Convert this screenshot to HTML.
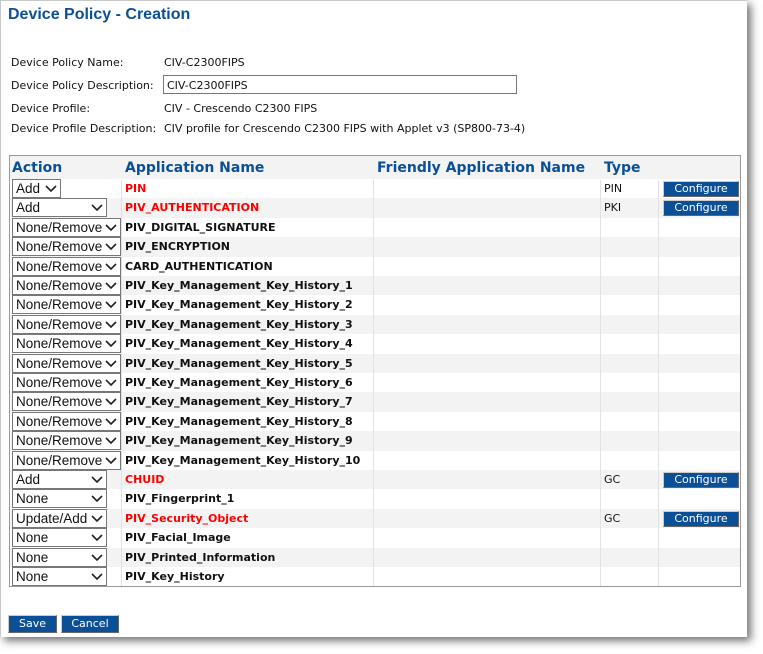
<!DOCTYPE html>
<html><head><style>
body{margin:0;width:763px;height:654px;background:#fff;position:relative;overflow:hidden;font-family:"DejaVu Sans",Verdana,sans-serif;}
#page{position:absolute;left:0;top:0;width:746px;height:636px;background:#fff;border-left:1px solid #c8c8c8;border-top:1px solid #c8c8c8;box-shadow:4px 4px 8px rgba(0,0,0,.55);}
.t{position:absolute;white-space:nowrap;}
h1{position:absolute;left:7px;top:5px;margin:0;font:bold 16px "Liberation Sans",Arial,sans-serif;color:#0b4f96;}
.lbl{font-size:11px;color:#111;}
#tbl{position:absolute;left:8px;top:154px;width:730px;height:430px;border:1px solid #999;background:#f3f3f3;}
.hd{position:absolute;top:4px;font-weight:bold;font-size:14px;color:#0b4f96;white-space:nowrap;}
.row{position:absolute;left:0;width:730px;height:19.4px;}
.row.g{background:#f3f3f3}.row.w{background:#fff}
.vl{position:absolute;top:24px;bottom:0;width:1px;background:#e2e2e2;}
.sel{position:absolute;left:2px;top:0;height:19px;border:1px solid #777;background:#fff;font:13.5px "Liberation Sans",Arial,sans-serif;color:#111;line-height:17px;padding-left:3px;box-sizing:border-box;white-space:nowrap;overflow:hidden;}
.sel svg{position:absolute;right:3px;top:5px;background:#fff;}
.nm{position:absolute;left:115px;top:3px;font-weight:bold;font-size:11px;color:#111;white-space:nowrap;}
.nm.r{color:#f00}
.ty{position:absolute;left:594px;top:3px;font-size:11px;color:#111;}
.btn{position:absolute;background:#0b4f96;color:#fff;font-size:11px;text-align:center;border:1px solid #ccc;border-right-color:#666;border-bottom-color:#666;box-sizing:border-box;}
</style></head><body>
<div id="page">
<h1>Device Policy - Creation</h1>
<div class="t lbl" style="left:10px;top:55px">Device Policy Name:</div>
<div class="t lbl" style="left:163px;top:55px">CIV-C2300FIPS</div>
<div class="t lbl" style="left:10px;top:78px">Device Policy Description:</div>
<div class="t" style="left:162px;top:74px;width:354px;height:19px;border:1px solid #777;box-sizing:border-box;"></div>
<div class="t lbl" style="left:166px;top:78px">CIV-C2300FIPS</div>
<div class="t lbl" style="left:10px;top:101px">Device Profile:</div>
<div class="t lbl" style="left:163px;top:101px">CIV - Crescendo C2300 FIPS</div>
<div class="t lbl" style="left:10px;top:121px">Device Profile Description:</div>
<div class="t lbl" style="left:163px;top:121px">CIV profile for Crescendo C2300 FIPS with Applet v3 (SP800-73-4)</div>

<div id="tbl">
<div class="hd" style="left:2px">Action</div>
<div class="hd" style="left:115px">Application Name</div>
<div class="hd" style="left:367px">Friendly Application Name</div>
<div class="hd" style="left:594px">Type</div>
<div id="rows"></div>
<div class="vl" style="left:111px"></div>
<div class="vl" style="left:363px"></div>
<div class="vl" style="left:590px"></div>
<div class="vl" style="left:648px"></div>
</div>

<div class="btn" style="left:7px;top:614px;width:49px;height:18px;line-height:16px;">Save</div>
<div class="btn" style="left:60px;top:614px;width:58px;height:18px;line-height:16px;">Cancel</div>
</div>
<script>
var d=[["Add",49,"PIN",1,"PIN"],["Add",95,"PIV_AUTHENTICATION",1,"PKI"],
["None/Remove",109,"PIV_DIGITAL_SIGNATURE"],["None/Remove",109,"PIV_ENCRYPTION"],["None/Remove",109,"CARD_AUTHENTICATION"]];
for(var i=1;i<=10;i++)d.push(["None/Remove",109,"PIV_Key_Management_Key_History_"+i]);
d.push(["Add",95,"CHUID",1,"GC"],["None",95,"PIV_Fingerprint_1"],["Update/Add",95,"PIV_Security_Object",1,"GC"],["None",95,"PIV_Facial_Image"],["None",95,"PIV_Printed_Information"],["None",95,"PIV_Key_History"]);
var h="";
var chev='<svg width="12" height="8" viewBox="0 0 12 8"><path d="M1 1 L6 6 L11 1" fill="none" stroke="#222" stroke-width="1.6"/></svg>';
for(var j=0;j<d.length;j++){var r=d[j];var yy=23+j*19.4;
h+='<div class="row '+(j%2?'g':'w')+'" style="top:'+yy+'px">';
h+='<div class="sel" style="width:'+r[1]+'px">'+r[0]+chev+'</div>';
h+='<div class="nm'+(r[3]?' r':'')+'">'+r[2]+'</div>';
if(r[4]){h+='<div class="ty">'+r[4]+'</div><div class="btn" style="left:653px;top:2px;width:76px;height:16px;line-height:14px;">Configure</div>';}
h+='</div>';}
document.getElementById('rows').innerHTML=h;
</script>
</body></html>
